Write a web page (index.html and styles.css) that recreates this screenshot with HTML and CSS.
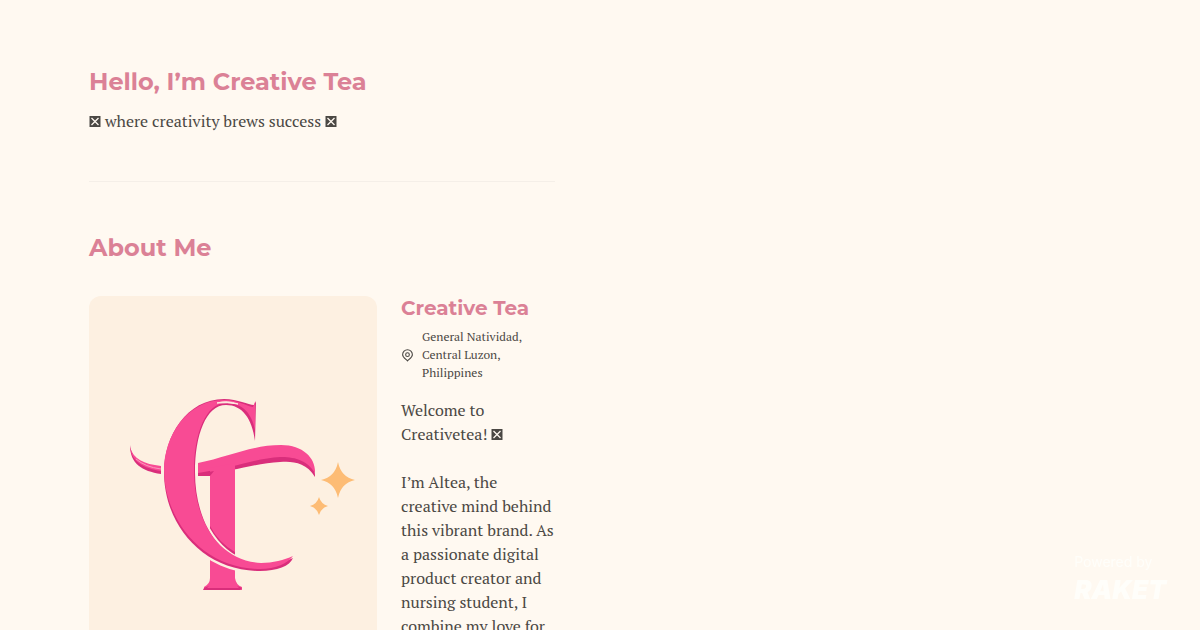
FILE: index.html
```
<!DOCTYPE html>
<html lang="en">

<head>
	<meta charset="UTF-8">
	<meta name="viewport" content="width=device-width, initial-scale=1.0">
	<title>Creative Tea</title>
	<link rel="stylesheet" href="styles.css">
</head>

<body>

	<svg class="symbols" aria-hidden="true">
		<symbol id="box" viewBox="0 0 11 11">
			<path d="M0 0h11v11H0z" fill="#4b4844" />
			<path d="M2 2l7 7M9 2l-7 7" stroke="#fff9f1" stroke-width="1.3" />
		</symbol>
	</svg>

	<main class="page">
		<div class="content">
			<header class="intro">
				<h1>Hello, I’m Creative Tea</h1>
				<p><svg class="emoji"><use href="#box" /></svg> where creativity brews success <svg class="emoji"><use href="#box" /></svg></p>
			</header>

			<section class="about">
				<h2>About Me</h2>
				<div class="profile">
					<svg class="photo" viewBox="89 296 288 400" role="img" aria-label="Creative Tea logo">
						<!-- swash and T -->
						<path class="dark" d="M130 445C132 460 143 466 161 468V474C142 471 130 464 130 445Z" />
						<path class="pink" d="M130 447C133 459 144 464 161 466V471C143 468 132 462 130 447Z" />
						<path d="M136 459Q145 467 161 469" fill="none" stroke="#fa9abd" />
						<path class="dark" d="M198 467C230 460 255 451 280 451C301 451 316 461 315 477C306 462 292 461 280 462C257 463 235 471 198 476Z" />
						<path class="pink" d="M198 463C228 457 252 445 281 445C304 445 316 459 315 473C306 459 293 457 280 457C257 458 234 468 198 473Z" />
						<path class="pink" d="M210 468L235 463V578Q236 585 242 587V590H204V587Q210 584 210 578Z" />
						<path class="dark" d="M198 474L214 471L210 476H198ZM210 526Q219 543 235 552V557Q220 548 210 532ZM204 588L209 586L207 588H239L237 586L242 588L240 590H203Z" />
						<!-- C -->
						<path class="gap" d="M250 405C242 401 234 399 224 399C187 399 164 436 164 472C164 526 204 571 260 571C277 571 289 565 293 557C284 563 272 565 260 565C219 562 194 521 194 472C194 435 205 404 226 404Z" />
						<path class="dark" d="M256 401L254 405C248 405 238 399 224 399C187 399 164 436 164 472C164 526 204 571 260 571C277 571 290 566 293 558C284 562 272 565 260 565C219 562 195 521 195 472C195 435 206 405 226 405C242 405 252 418 255 441Z" />
						<path class="pink" d="M255 402L253 407C246 406 238 400 224 400C187 400 164 436 164 470C165 523 205 569 260 569C276 569 288 563 293 556C284 560 273 563 261 563C219 561 194 521 194 471C194 433 206 403 226 403C243 403 252 414 255 430Z" />
						<path d="M217 403Q227 400 238 404Q227 402 217 403Z" fill="#fdf0e1" stroke="#fdf0e1" />
						<!-- sparkles -->
						<path class="star" d="M338 462Q341 477 355 480Q341 483 338 498Q335 483 321 480Q335 477 338 462Z" />
						<path class="star" d="M319 497Q321 504 328 506Q321 508 319 515Q317 508 310 506Q317 504 319 497Z" />
					</svg>
					<div class="bio">
						<h3>Creative Tea</h3>
						<div class="location">
							<svg class="pin" viewBox="0 0 12 12" fill="none" stroke="#4b4844">
								<path d="M6 11C4 9 1.500 7.500 1.500 5.200a4.500 4.500 0 0 1 9 0C10.500 7.500 8 9 6 11Z" />
								<circle cx="6" cy="5.200" r="1.700" />
							</svg>
							<span>General Natividad, Central Luzon, Philippines</span>
						</div>
						<p>Welcome to Creativetea! <svg class="emoji"><use href="#box" /></svg></p>
						<p>I’m Altea, the creative mind behind this vibrant brand. As a passionate digital product creator and nursing student, I combine my love for</p>
					</div>
				</div>
			</section>
		</div>
	</main>

	<a class="powered" href="#">
		<span>Powered by</span>
		<strong>RAKET</strong>
	</a>

</body>

</html>
```
FILE: styles.css
```
* {
	box-sizing: border-box;
}

body {
	margin: 0;
	height: 100vh;
	overflow: hidden;
	background: #fff9f1;
	color: #4b4844;
	font-family: 'PT Serif', 'Liberation Serif', serif;
	font-size: 16px;
	line-height: 24px;
}

h1,
h2,
h3,
p {
	margin: 0;
}

h1,
h2,
h3 {
	color: #db8196;
	font-family: Montserrat, Inter, sans-serif;
	font-weight: 700;
}

h1,
h2 {
	font-size: 24px;
	line-height: 32px;
}

h3 {
	font-size: 20px;
	line-height: 24px;
}

.symbols {
	position: absolute;
	width: 0;
	height: 0;
}

.page {
	display: grid;
	grid-template-columns: 1fr 1fr;
	gap: 90px;
	max-width: 1200px;
	margin: 0 auto;
	padding: 66px 89px 0;
}

.intro {
	padding-bottom: 48px;
	border-bottom: 1px solid #f5efe8;
}

.intro p {
	margin-top: 11px;
}

.emoji {
	width: 12px;
	height: 11px;
}

.about {
	padding-top: 50px;
}

.profile {
	display: grid;
	grid-template-columns: 288px 1fr;
	align-items: start;
	gap: 24px;
	margin-top: 32px;
}

.photo {
	width: 100%;
	border-radius: 12px;
	background: #fdf0e1;
}

.pink {
	fill: #f84b94;
}

.dark {
	fill: #d92e7b;
}

.gap {
	fill: #fdf0e1;
	stroke: #fdf0e1;
	stroke-width: 5;
}

.star {
	fill: #fdbc75;
}

.location {
	display: flex;
	align-items: center;
	gap: 8px;
	margin: 8px 0 16px;
	font-size: 12px;
	line-height: 18px;
}

.pin {
	flex: none;
	width: 13px;
	height: 13px;
}

.bio p + p {
	margin-top: 24px;
}

.powered {
	position: fixed;
	right: 34px;
	bottom: 24px;
	display: flex;
	flex-direction: column;
	color: #fffefa;
	font-family: Inter, sans-serif;
	font-size: 14px;
	text-decoration: none;
}

.powered strong {
	font-size: 26px;
	line-height: 32px;
	font-style: italic;
	font-weight: 900;
}
```
